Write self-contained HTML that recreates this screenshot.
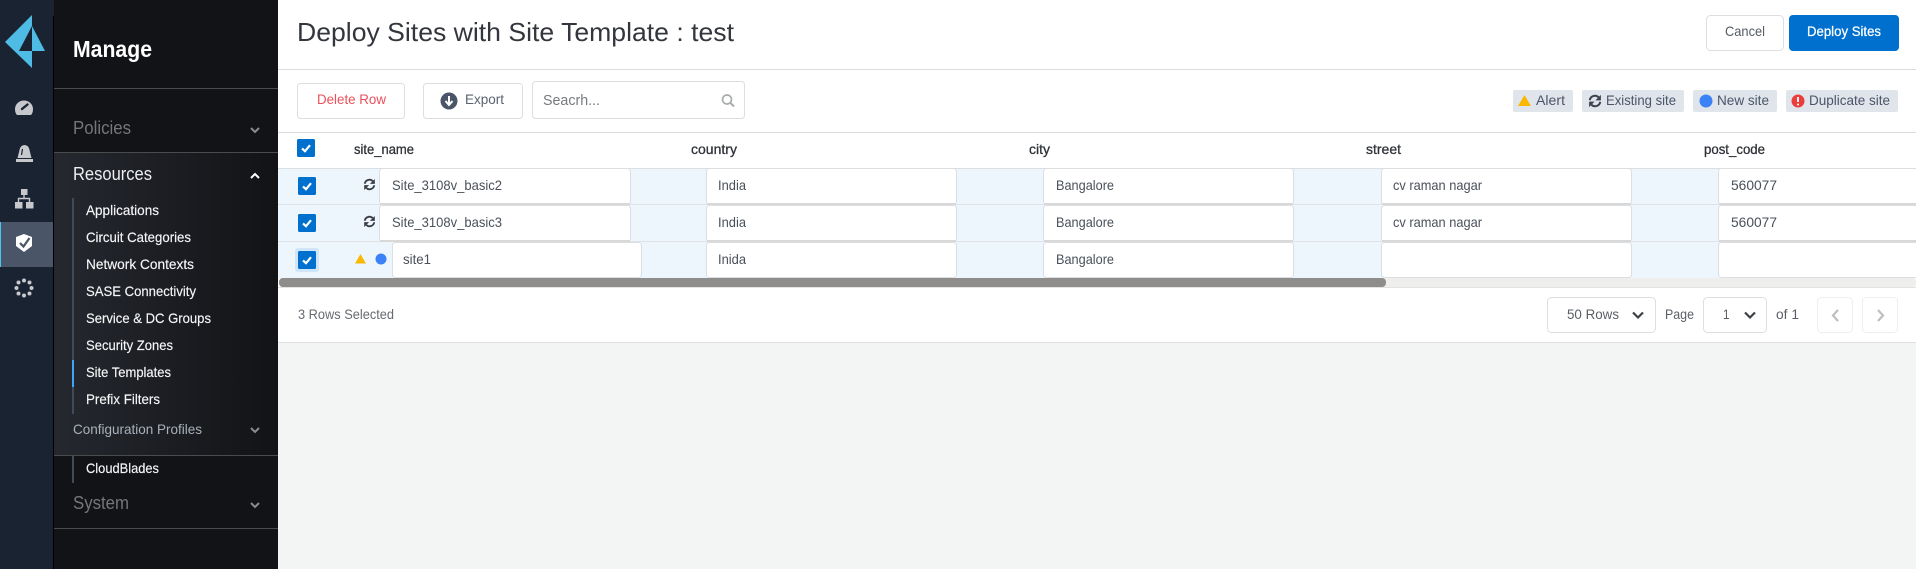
<!DOCTYPE html>
<html lang="en">
<head>
<meta charset="utf-8">
<title>Deploy Sites with Site Template : test</title>
<style>
html,body{margin:0;padding:0;width:1916px;height:569px;overflow:hidden;background:#f3f5f4}
svg{display:block}
text{font-family:"Liberation Sans",sans-serif;font-size:14px;fill:#4a5059}
.nav{fill:#f4f6f8;font-size:14px;stroke:#f4f6f8;stroke-width:.15px}
.h{fill:#2f3338;font-size:14px;stroke:#2f3338;stroke-width:.3px}
.in{fill:#fff;stroke:#dcdfe2;stroke-width:1}
.btn{fill:#fff;stroke:#dcdee0;stroke-width:1}
.leg{fill:#4a5568;font-size:14px}
.chip{fill:#e0e5ec}
.band{fill:#d8d8d8}
</style>
</head>
<body>
<svg xmlns="http://www.w3.org/2000/svg" width="1916" height="569" viewBox="0 0 1916 569">
<defs>
<linearGradient id="sec" x1="0" x2="1" y1="0" y2="0">
<stop offset="0" stop-color="#25282f"/><stop offset="1" stop-color="#121316"/>
</linearGradient>
<g id="cb"><rect width="18" height="18" rx="1.5" fill="#0070cf"/><path d="M5 9.5L8 12.2L13 6.2" fill="none" stroke="#fff" stroke-width="2.2"/></g>
<g id="sync"><path d="M-5 -.8A5 5 0 0 1 3.4 -3.6" fill="none" stroke-width="1.9"/><path d="M5.6 -5.8V-.6H.4Z" stroke="none"/><path d="M5 .8A5 5 0 0 1 -3.4 3.6" fill="none" stroke-width="1.9"/><path d="M-5.6 5.8V.6H-.4Z" stroke="none"/></g>
</defs>

<!-- main -->
<rect width="1916" height="569" fill="#f3f5f4"/>
<rect x="278" y="0" width="1638" height="342" fill="#fff"/>
<rect x="278" y="69" width="1638" height="1" fill="#dcdcdc"/>
<rect x="278" y="132" width="1638" height="1" fill="#dcdcdc"/>
<rect x="278" y="168" width="1638" height="1" fill="#dcdfe2"/>
<rect x="278" y="342" width="1638" height="1" fill="#e0e0e0"/>

<!-- rail -->
<rect width="54" height="569" fill="#1a2332"/>
<rect x="53" y="16" width="1" height="553" fill="#000"/>
<path d="M5 42L32 15V26L19 51H32V68Z" fill="#4fbce6"/>
<path d="M32 26L45 51H32Z" fill="#4fbce6"/>
<path d="M17 115Q15 113 15 109A9 8.500 0 0 1 33 109Q33 113 31 115Z" fill="#c6c8cc"/>
<path d="M22 109L27.500 104.500" stroke="#1a2332" stroke-width="2.400" stroke-linecap="round"/>
<path d="M17.500 158L19.500 150Q20.500 145 24.500 145Q28.500 145 29.500 150L31.500 158Z" fill="#c6c8cc"/>
<rect x="16" y="159" width="17" height="3" fill="#c6c8cc"/>
<path d="M22.500 149L21.500 155" stroke="#1a2332" stroke-width="1.200"/>
<rect x="21" y="189" width="6.500" height="6" fill="#c6c8cc"/>
<rect x="15" y="202" width="7.500" height="6.500" fill="#c6c8cc"/>
<rect x="26" y="202" width="7.500" height="6.500" fill="#c6c8cc"/>
<path d="M24 195V199M18.500 202V198.500H29.500V202" fill="none" stroke="#c6c8cc" stroke-width="1.400"/>
<rect x="0" y="222" width="53" height="45" fill="#4a5568"/>
<rect x="0" y="222" width="1" height="45" fill="#4fc3f7"/>
<path d="M16 237L24 234L32 237V246L24 252L16 246Z" fill="#fff"/>
<path d="M20 243L23.500 246.500L29.500 238" fill="none" stroke="#4a5568" stroke-width="2.200"/>
<g fill="#c6c8cc">
<circle cx="24" cy="280.500" r="2"/><circle cx="29.500" cy="282.500" r="2"/><circle cx="31.500" cy="288" r="2"/><circle cx="29.500" cy="293.500" r="2"/>
<circle cx="24" cy="295.500" r="2"/><circle cx="18.500" cy="293.500" r="2"/><circle cx="16.500" cy="288" r="2"/><circle cx="18.500" cy="282.500" r="2"/>
</g>

<!-- panel -->
<rect x="54" y="0" width="224" height="569" fill="#121316"/>
<rect x="54" y="152" width="224" height="303" fill="url(#sec)"/>
<rect x="54" y="88" width="224" height="1" fill="#4a4b4d"/>
<rect x="54" y="152" width="224" height="1" fill="#4a4b4d"/>
<rect x="54" y="455" width="224" height="1" fill="#4a4b4d"/>
<rect x="54" y="528" width="224" height="1" fill="#4a4b4d"/>
<rect x="72" y="198" width="2" height="216" fill="#3f4a5a"/>
<rect x="72" y="360" width="2" height="27" fill="#3ea6f5"/>
<rect x="72" y="456" width="2" height="27" fill="#3f4a5a"/>
<text x="73" y="57" textLength="79" lengthAdjust="spacingAndGlyphs" style="font-size:23px;font-weight:bold;fill:#fff">Manage</text>
<text x="73" y="134" textLength="58" lengthAdjust="spacingAndGlyphs" style="font-size:18px;fill:#757678">Policies</text>
<text x="73" y="180" textLength="79" lengthAdjust="spacingAndGlyphs" style="font-size:18px;fill:#eceef0">Resources</text>
<text class="nav" x="86" y="215" textLength="73" lengthAdjust="spacingAndGlyphs">Applications</text>
<text class="nav" x="86" y="242" textLength="105" lengthAdjust="spacingAndGlyphs">Circuit Categories</text>
<text class="nav" x="86" y="269" textLength="108" lengthAdjust="spacingAndGlyphs">Network Contexts</text>
<text class="nav" x="86" y="296" textLength="110" lengthAdjust="spacingAndGlyphs">SASE Connectivity</text>
<text class="nav" x="86" y="323" textLength="125" lengthAdjust="spacingAndGlyphs">Service &amp; DC Groups</text>
<text class="nav" x="86" y="350" textLength="87" lengthAdjust="spacingAndGlyphs">Security Zones</text>
<text class="nav" x="86" y="377" textLength="85" lengthAdjust="spacingAndGlyphs">Site Templates</text>
<text class="nav" x="86" y="404" textLength="74" lengthAdjust="spacingAndGlyphs">Prefix Filters</text>
<text x="73" y="434" textLength="129" lengthAdjust="spacingAndGlyphs" style="font-size:14px;fill:#a9b1bb">Configuration Profiles</text>
<text class="nav" x="86" y="473" textLength="73" lengthAdjust="spacingAndGlyphs">CloudBlades</text>
<text x="73" y="509" textLength="56" lengthAdjust="spacingAndGlyphs" style="font-size:18px;fill:#757678">System</text>
<g fill="none" stroke-width="2">
<path d="M251 128L255 132L259 128" stroke="#8a8b8d"/>
<path d="M251 178L255 174L259 178" stroke="#fff"/>
<path d="M251 428L255 432L259 428" stroke="#8a8b8d"/>
<path d="M251 503L255 507L259 503" stroke="#8a8b8d"/>
</g>

<!-- header -->
<text x="297" y="41" textLength="437" lengthAdjust="spacingAndGlyphs" style="font-size:26px;fill:#33373d">Deploy Sites with Site Template : test</text>
<rect class="btn" x="1706.500" y="15.500" width="77" height="35" rx="4"/>
<text x="1725" y="36" textLength="40" lengthAdjust="spacingAndGlyphs" style="fill:#555b63">Cancel</text>
<rect x="1789" y="15" width="110" height="36" rx="4" fill="#0070cf"/>
<text x="1807" y="36" textLength="74" lengthAdjust="spacingAndGlyphs" style="fill:#fff;stroke:#fff;stroke-width:.25px">Deploy Sites</text>

<!-- toolbar -->
<rect class="btn" x="297.500" y="83.500" width="107" height="35" rx="3"/>
<text x="317" y="104" textLength="69" lengthAdjust="spacingAndGlyphs" style="fill:#ea4f5b">Delete Row</text>
<rect class="btn" x="423.500" y="83.500" width="99" height="35" rx="3"/>
<circle cx="449" cy="101" r="8.500" fill="#4a5568"/>
<path d="M449 96V104M445.500 101L449 105L452.500 101" fill="none" stroke="#fff" stroke-width="2"/>
<text x="465" y="104" textLength="39" lengthAdjust="spacingAndGlyphs" style="fill:#5a6370">Export</text>
<rect class="btn" x="532.500" y="81.500" width="212" height="37" rx="3"/>
<text x="543" y="105" textLength="57" lengthAdjust="spacingAndGlyphs" style="font-size:15px;fill:#777a7e">Seacrh...</text>
<circle cx="727" cy="99.500" r="4.500" fill="none" stroke="#a9abad" stroke-width="1.700"/>
<path d="M730.500 103L734 106.500" stroke="#a9abad" stroke-width="2"/>

<!-- legend -->
<rect class="chip" x="1513" y="90" width="60" height="22" rx="2"/>
<path d="M1524.500 95L1531 106H1518Z" fill="#fbb800"/>
<text class="leg" x="1536" y="105" textLength="29" lengthAdjust="spacingAndGlyphs">Alert</text>
<rect class="chip" x="1582" y="90" width="102" height="22" rx="2"/>
<use href="#sync" transform="translate(1595 101) scale(1.050)" fill="#3a4250" stroke="#3a4250"/>
<text class="leg" x="1606" y="105" textLength="70" lengthAdjust="spacingAndGlyphs">Existing site</text>
<rect class="chip" x="1693" y="90" width="84" height="22" rx="2"/>
<circle cx="1706" cy="101" r="6.500" fill="#3b82f6"/>
<text class="leg" x="1717" y="105" textLength="52" lengthAdjust="spacingAndGlyphs">New site</text>
<rect class="chip" x="1786" y="90" width="112" height="22" rx="2"/>
<circle cx="1798" cy="101" r="6.500" fill="#ea3d3d"/>
<path d="M1798 97V102" stroke="#fff" stroke-width="1.800"/><circle cx="1798" cy="104.500" r="1" fill="#fff"/>
<text class="leg" x="1809" y="105" textLength="81" lengthAdjust="spacingAndGlyphs">Duplicate site</text>

<!-- table head -->
<use href="#cb" x="297" y="139"/>
<text class="h" x="354" y="154" textLength="60" lengthAdjust="spacingAndGlyphs">site_name</text>
<text class="h" x="691" y="154" textLength="46" lengthAdjust="spacingAndGlyphs">country</text>
<text class="h" x="1029" y="154" textLength="21" lengthAdjust="spacingAndGlyphs">city</text>
<text class="h" x="1366" y="154" textLength="35" lengthAdjust="spacingAndGlyphs">street</text>
<text class="h" x="1704" y="154" textLength="61" lengthAdjust="spacingAndGlyphs">post_code</text>

<!-- rows -->
<rect x="278" y="169" width="1638" height="109" fill="#edf5fd"/>
<rect x="278" y="204" width="1638" height="1" fill="#dfe3e8"/>
<rect x="278" y="241" width="1638" height="1" fill="#dfe3e8"/>

<!-- row 1 -->
<rect class="in" x="379.500" y="168.500" width="251" height="36" rx="3"/>
<rect class="in" x="706.500" y="168.500" width="250" height="36" rx="3"/>
<rect class="in" x="1043.500" y="168.500" width="250" height="36" rx="3"/>
<rect class="in" x="1381.500" y="168.500" width="250" height="36" rx="3"/>
<rect class="in" x="1718.500" y="168.500" width="210" height="36" rx="3"/>
<!-- row 2 -->
<rect class="in" x="379.500" y="205.500" width="251" height="36" rx="3"/>
<rect class="in" x="706.500" y="205.500" width="250" height="36" rx="3"/>
<rect class="in" x="1043.500" y="205.500" width="250" height="36" rx="3"/>
<rect class="in" x="1381.500" y="205.500" width="250" height="36" rx="3"/>
<rect class="in" x="1718.500" y="205.500" width="210" height="36" rx="3"/>
<!-- row 3 -->
<rect class="in" x="392.500" y="242.500" width="249" height="35" rx="3"/>
<rect class="in" x="706.500" y="242.500" width="250" height="35" rx="3"/>
<rect class="in" x="1043.500" y="242.500" width="250" height="35" rx="3"/>
<rect class="in" x="1381.500" y="242.500" width="250" height="35" rx="3"/>
<rect class="in" x="1718.500" y="242.500" width="210" height="35" rx="3"/>
<!-- bands under inputs -->
<rect class="band" x="380" y="203" width="250" height="2"/>
<rect class="band" x="707" y="203" width="249" height="2"/>
<rect class="band" x="1044" y="203" width="249" height="2"/>
<rect class="band" x="1382" y="203" width="249" height="2"/>
<rect class="band" x="1719" y="203" width="197" height="2"/>
<rect class="band" x="380" y="240" width="250" height="2"/>
<rect class="band" x="707" y="240" width="249" height="2"/>
<rect class="band" x="1044" y="240" width="249" height="2"/>
<rect class="band" x="1382" y="240" width="249" height="2"/>
<rect class="band" x="1719" y="240" width="197" height="2"/>

<use href="#cb" x="298" y="177"/>
<use href="#cb" x="298" y="214"/>
<rect x="295" y="248" width="24" height="24" rx="3" fill="#cfe6fa"/>
<use href="#cb" x="298" y="251"/>
<use href="#sync" transform="translate(369.500 184.500) scale(.95)" fill="#3a3d42" stroke="#3a3d42"/>
<use href="#sync" transform="translate(369.500 221.500) scale(.95)" fill="#3a3d42" stroke="#3a3d42"/>
<path d="M360.500 254L366 263.500H355Z" fill="#fbb800"/>
<circle cx="381" cy="259" r="5.500" fill="#3b82f6"/>

<text x="392" y="190" textLength="110" lengthAdjust="spacingAndGlyphs">Site_3108v_basic2</text>
<text x="718" y="190" textLength="28" lengthAdjust="spacingAndGlyphs">India</text>
<text x="1056" y="190" textLength="58" lengthAdjust="spacingAndGlyphs">Bangalore</text>
<text x="1393" y="190" textLength="89" lengthAdjust="spacingAndGlyphs">cv raman nagar</text>
<text x="1731" y="190" textLength="46" lengthAdjust="spacingAndGlyphs">560077</text>
<text x="392" y="227" textLength="110" lengthAdjust="spacingAndGlyphs">Site_3108v_basic3</text>
<text x="718" y="227" textLength="28" lengthAdjust="spacingAndGlyphs">India</text>
<text x="1056" y="227" textLength="58" lengthAdjust="spacingAndGlyphs">Bangalore</text>
<text x="1393" y="227" textLength="89" lengthAdjust="spacingAndGlyphs">cv raman nagar</text>
<text x="1731" y="227" textLength="46" lengthAdjust="spacingAndGlyphs">560077</text>
<text x="403" y="264" textLength="28" lengthAdjust="spacingAndGlyphs">site1</text>
<text x="718" y="264" textLength="28" lengthAdjust="spacingAndGlyphs">Inida</text>
<text x="1056" y="264" textLength="58" lengthAdjust="spacingAndGlyphs">Bangalore</text>

<!-- scrollbar -->
<rect x="279" y="278" width="1637" height="9" rx="3" fill="#eeeeec"/>
<rect x="279" y="278" width="1107" height="9" rx="4" fill="#8e8d8b"/>
<rect x="278" y="287" width="1638" height="1" fill="#e2e2e2"/>

<!-- footer -->
<text x="298" y="319" textLength="96" lengthAdjust="spacingAndGlyphs" style="fill:#666b70">3 Rows Selected</text>
<rect class="btn" x="1547.500" y="297.500" width="108" height="35" rx="4"/>
<text x="1567" y="319" textLength="52" lengthAdjust="spacingAndGlyphs" style="fill:#5a5f66">50 Rows</text>
<path d="M1633 312.500L1638 317.500L1643 312.500" fill="none" stroke="#3d4046" stroke-width="2.200"/>
<text x="1665" y="319" textLength="29" lengthAdjust="spacingAndGlyphs" style="fill:#5a5f66">Page</text>
<rect class="btn" x="1703.500" y="297.500" width="63" height="35" rx="4"/>
<text x="1723" y="319" textLength="6.500" lengthAdjust="spacingAndGlyphs" style="fill:#5a5f66">1</text>
<path d="M1745 312.500L1750 317.500L1755 312.500" fill="none" stroke="#3d4046" stroke-width="2.200"/>
<text x="1776" y="319" textLength="23" lengthAdjust="spacingAndGlyphs" style="fill:#5a5f66">of 1</text>
<rect x="1817.500" y="297.500" width="35" height="35" rx="4" fill="#fff" stroke="#eeeeee"/>
<path d="M1838 310L1833 315.500L1838 321" fill="none" stroke="#bcbfc2" stroke-width="2.200"/>
<rect x="1862.500" y="297.500" width="35" height="35" rx="4" fill="#fff" stroke="#eeeeee"/>
<path d="M1878 310L1883 315.500L1878 321" fill="none" stroke="#bcbfc2" stroke-width="2.200"/>
</svg>
</body>
</html>
